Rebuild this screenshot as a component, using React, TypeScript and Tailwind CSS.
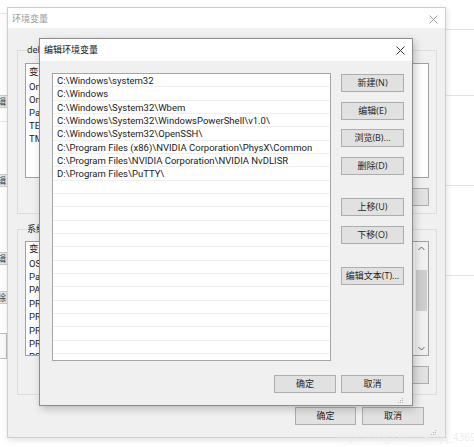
import React from "react";

const paths = [
  "C:\\Windows\\system32",
  "C:\\Windows",
  "C:\\Windows\\System32\\Wbem",
  "C:\\Windows\\System32\\WindowsPowerShell\\v1.0\\",
  "C:\\Windows\\System32\\OpenSSH\\",
  "C:\\Program Files (x86)\\NVIDIA Corporation\\PhysX\\Common",
  "C:\\Program Files\\NVIDIA Corporation\\NVIDIA NvDLISR",
  "D:\\Program Files\\PuTTY\\",
];

const userVars = ["OneDrive", "OneDriveConsumer", "Path", "TEMP", "TMP"];
const sysVars = [
  "OS",
  "Path",
  "PATHEXT",
  "PROCESSOR_ARCHITECTURE",
  "PROCESSOR_IDENTIFIER",
  "PROCESSOR_LEVEL",
  "PROCESSOR_REVISION",
  "PSModulePath",
];

const CloseX = ({ color }: { color: string }) => (
  <svg width="9" height="9" viewBox="0 0 9 9">
    <path d="M0.5 0.5 L8.5 8.5 M8.5 0.5 L0.5 8.5" stroke={color} strokeWidth="1" />
  </svg>
);

const Grip = () => (
  <svg width="7" height="7" viewBox="0 0 7 7" fill="#b5b5b5">
    <rect x="5" y="1" width="1" height="1" />
    <rect x="3" y="3" width="1" height="1" />
    <rect x="5" y="3" width="1" height="1" />
    <rect x="1" y="5" width="1" height="1" />
    <rect x="3" y="5" width="1" height="1" />
    <rect x="5" y="5" width="1" height="1" />
  </svg>
);

const Chevron = ({ up }: { up?: boolean }) => (
  <svg width="7" height="5" viewBox="0 0 7 5">
    <path d={up ? "M0.5 4 L3.5 1 L6.5 4" : "M0.5 1 L3.5 4 L6.5 1"} stroke="#606060" strokeWidth="1" fill="none" />
  </svg>
);

function Btn({ label, className = "" }: { label: string; className?: string }) {
  return (
    <div
      className={`flex h-[18px] items-center justify-center border border-[#adadad] bg-[#e1e1e1] text-[9px] text-[#1e1e1e] ${className}`}
    >
      {label}
    </div>
  );
}

// far-left strip of the window lying behind everything
function LeftStrip() {
  const frag = (label: string, mt: string) => (
    <div className={`flex h-[13px] w-[7px] justify-end overflow-hidden border-y border-[#c9c9c9] bg-[#e6e6e6] ${mt}`}>
      <span className="shrink-0 pr-[1px] text-[9px] leading-[11px] text-[#444]">{label}</span>
    </div>
  );
  return (
    <div className="flex w-[7px] flex-col">
      <div className="mt-[13px] h-px bg-[#e6e6e6]" />
      {frag("编辑", "mt-[81px]")}
      <div className="mt-[13px] h-px bg-[#e6e6e6]" />
      {frag("编辑", "mt-[52px]")}
      {frag("编辑", "mt-[65px]")}
      {frag("删除", "mt-[26px]")}
      <div className="mt-[29px] h-[26px] w-[7px] border-y border-r border-[#bdbdbd] bg-[#fafafa]" />
    </div>
  );
}

function RightStrip() {
  return (
    <div className="flex w-[28px] flex-col">
      <div className="mt-[29px] h-px bg-[#e2e2e2]" />
      <div className="mt-[65px] h-px bg-[#e2e2e2]" />
      <div className="mt-[89px] h-px bg-[#e2e2e2]" />
      <div className="mt-[89px] h-px bg-[#e2e2e2]" />
    </div>
  );
}

function EnvWindow() {
  return (
    <div className="absolute left-[7px] top-[7px] flex h-[431px] w-[439px] flex-col border border-[#cfcfcf] bg-[#f0f0f0] shadow-[1px_2px_6px_rgba(0,0,0,0.12)]">
      <div className="flex h-[20px] items-center justify-between bg-white pl-[4px] pr-[7px] pt-[2px]">
        <span className="text-[9px] text-[#9a9a9a]">环境变量</span>
        <CloseX color="#a0a0a0" />
      </div>
      <div className="flex flex-1 flex-col pl-[9px] pr-[8px]">
        <fieldset className="mt-[16px] h-[170px] border border-[#dcdcdc] px-[7px]">
          <legend className="ml-[2px] text-[9px] leading-[12px] text-[#222]">dell 的用户变量(U)</legend>
          <div className="mt-[7px] h-[115px] border border-[#a0a0a0] bg-white font-['Roboto','Noto_Sans_CJK_SC',sans-serif] text-[9.5px] text-[#222]">
            <div className="flex h-[17px] items-center pl-[3px]">变量</div>
            {userVars.map((v) => (
              <div key={v} className="flex h-[13px] items-center pl-[3px]">
                {v}
              </div>
            ))}
          </div>
          <div className="mt-[10px] flex justify-end gap-[6px]">
            <Btn label="新建(N)..." className="w-[75px]" />
            <Btn label="编辑(E)..." className="w-[75px]" />
            <Btn label="删除(D)" className="w-[75px]" />
          </div>
        </fieldset>
        <fieldset className="mt-[9px] h-[172px] border border-[#dcdcdc] px-[7px]">
          <legend className="ml-[2px] text-[9px] leading-[12px] text-[#222]">系统变量(S)</legend>
          <div className="mt-[6px] flex h-[115px] border border-[#a0a0a0] bg-white font-['Roboto','Noto_Sans_CJK_SC',sans-serif] text-[9.5px] text-[#222]">
            <div className="flex-1 overflow-hidden">
              <div className="flex h-[15px] items-center pl-[3px]">变量</div>
              {sysVars.map((v) => (
                <div key={v} className="flex h-[13.4px] items-center pl-[3px]">
                  {v}
                </div>
              ))}
            </div>
            <div className="flex w-[13px] flex-col items-center bg-[#f0f0f0]">
              <div className="mt-[4px]">
                <Chevron up />
              </div>
              <div className="mt-[19px] h-[41px] w-[11px] bg-[#cdcdcd]" />
              <div className="mb-[4px] mt-auto">
                <Chevron />
              </div>
            </div>
          </div>
          <div className="mt-[10px] flex justify-end gap-[6px]">
            <Btn label="新建(W)..." className="w-[75px]" />
            <Btn label="编辑(I)..." className="w-[75px]" />
            <Btn label="删除(L)" className="w-[75px]" />
          </div>
        </fieldset>
        <div className="mt-[12px] flex justify-end gap-[6px] pr-[13px]">
          <Btn label="确定" className="w-[61px]" />
          <Btn label="取消" className="w-[62px]" />
        </div>
        <div className="mt-auto flex justify-end pb-[1px]">
          <Grip />
        </div>
      </div>
    </div>
  );
}

function EditDialog() {
  const rows = Array.from({ length: 22 }, (_, i) => paths[i] ?? "");
  return (
    <div className="absolute left-[39px] top-[38px] flex h-[368px] w-[374px] flex-col border border-[#8c8c8c] bg-[#f0f0f0] shadow-[2px_3px_8px_rgba(0,0,0,0.22)]">
      <div className="flex h-[22px] items-center justify-between bg-white pl-[4px] pr-[7px]">
        <span className="text-[9px] text-[#111]">编辑环境变量</span>
        <CloseX color="#333" />
      </div>
      <div className="flex flex-1 flex-col pl-[12px] pr-[8px] pt-[12px]">
        <div className="flex gap-[10px]">
          <div className="h-[288px] w-[279px] overflow-hidden border border-[#a5a5a5] bg-white font-['Roboto',sans-serif]">
            {rows.map((p, i) => (
              <div
                key={i}
                className="h-[13.33px] border-b border-[#efefef] pl-[4px] pt-[1px] text-[9.5px] leading-[12px] whitespace-nowrap text-[#1a1a1a]"
              >
                {p}
              </div>
            ))}
          </div>
          <div className="flex w-[63px] flex-col">
            <Btn label="新建(N)" className="mt-[1px]" />
            <Btn label="编辑(E)" className="mt-[10px]" />
            <Btn label="浏览(B)..." className="mt-[9px]" />
            <Btn label="删除(D)" className="mt-[10px]" />
            <Btn label="上移(U)" className="mt-[23px]" />
            <Btn label="下移(O)" className="mt-[10px]" />
            <Btn label="编辑文本(T)..." className="mt-[23px]" />
          </div>
        </div>
        <div className="mt-[14px] flex justify-end gap-[5px]">
          <Btn label="确定" className="w-[62px]" />
          <Btn label="取消" className="w-[63px]" />
        </div>
        <div className="mt-auto flex justify-end pb-[1px]">
          <Grip />
        </div>
      </div>
    </div>
  );
}

export default function App() {
  return (
    <div className="relative flex h-[447px] w-[474px] justify-between overflow-hidden bg-white font-['Open_Sans','Noto_Sans_CJK_SC',sans-serif]">
      <LeftStrip />
      <RightStrip />
      <EnvWindow />
      <EditDialog />
      <div className="absolute left-[336px] top-[432px] text-[10px] leading-[10px] text-[#ececec]">
        https://blog.csdn.net/qq_43696056
      </div>
    </div>
  );
}
